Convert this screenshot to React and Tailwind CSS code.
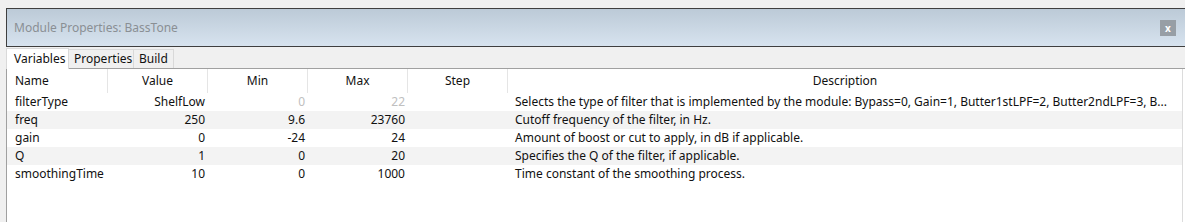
const rows = [
  { name: 'filterType', value: 'ShelfLow', min: '0', max: '22', muted: true, desc: 'Selects the type of filter that is implemented by the module: Bypass=0, Gain=1, Butter1stLPF=2, Butter2ndLPF=3, B...' },
  { name: 'freq', value: '250', min: '9.6', max: '23760', desc: 'Cutoff frequency of the filter, in Hz.' },
  { name: 'gain', value: '0', min: '-24', max: '24', desc: 'Amount of boost or cut to apply, in dB if applicable.' },
  { name: 'Q', value: '1', min: '0', max: '20', desc: 'Specifies the Q of the filter, if applicable.' },
  { name: 'smoothingTime', value: '10', min: '0', max: '1000', desc: 'Time constant of the smoothing process.' },
]

const cols = 'grid grid-cols-[101px_100px_100px_100px_100px_1fr]'

export default function App() {
  return (
    <div className="w-[1185px] h-[222px] bg-[#f0f0f0] pt-[8px] pl-[6px] overflow-hidden text-[12px] text-[#111] font-['Noto_Sans',sans-serif] flex flex-col">
      <div className="h-[39px] border-y border-l border-[#3f3f3f] bg-gradient-to-b from-[#bccad7] to-[#d7e3ef] flex items-center justify-between pl-[7px] pr-[9px]">
        <span className="text-[#8a8f94]">Module Properties: BassTone</span>
        <div className="w-[16px] h-[16px] bg-[#979ea5] flex items-center justify-center text-white text-[10px] font-bold leading-none">x</div>
      </div>
      <div className="h-[21px] flex items-end relative">
        <div className="h-[21px] w-[63px] bg-white border-t border-l border-r border-[#d9d9d9] flex items-center pl-[7px] relative z-10 -mb-px">Variables</div>
        <div className="h-[19px] w-[65px] bg-[#f0f0f0] border-t border-r border-[#d9d9d9] flex items-center pl-[5px]">Properties</div>
        <div className="h-[19px] w-[40px] bg-[#f0f0f0] border-t border-r border-[#d9d9d9] flex items-center pl-[5px]">Build</div>
      </div>
      <div className="flex-1 bg-white border-t border-l border-[#a0a0a0] flex">
        <div className="flex-1">
          <div className={`${cols} h-[24px] items-stretch`}>
            <div className="flex items-center pl-[8px] border-r border-[#e5e5e5]">Name</div>
            <div className="flex items-center justify-center border-r border-[#e5e5e5]">Value</div>
            <div className="flex items-center justify-center border-r border-[#e5e5e5]">Min</div>
            <div className="flex items-center justify-center border-r border-[#e5e5e5]">Max</div>
            <div className="flex items-center justify-center border-r border-[#e5e5e5]">Step</div>
            <div className="flex items-center justify-center">Description</div>
          </div>
          {rows.map((r, i) => (
            <div key={r.name} className={`${cols} h-[18px] items-center ${i % 2 === 1 ? 'bg-[#f3f3f3]' : 'bg-white'}`}>
              <div className="pl-[8px]">{r.name}</div>
              <div className="text-right pr-[3px]">{r.value}</div>
              <div className={`text-right pr-[3px] ${r.muted ? 'text-[#c0c0c0]' : ''}`}>{r.min}</div>
              <div className={`text-right pr-[3px] ${r.muted ? 'text-[#c0c0c0]' : ''}`}>{r.max}</div>
              <div></div>
              <div className="pl-[7px] whitespace-nowrap overflow-hidden">{r.desc}</div>
            </div>
          ))}
        </div>
        <div className="w-[3px] border-l border-[#dcdcdc] bg-white"></div>
      </div>
    </div>
  )
}
